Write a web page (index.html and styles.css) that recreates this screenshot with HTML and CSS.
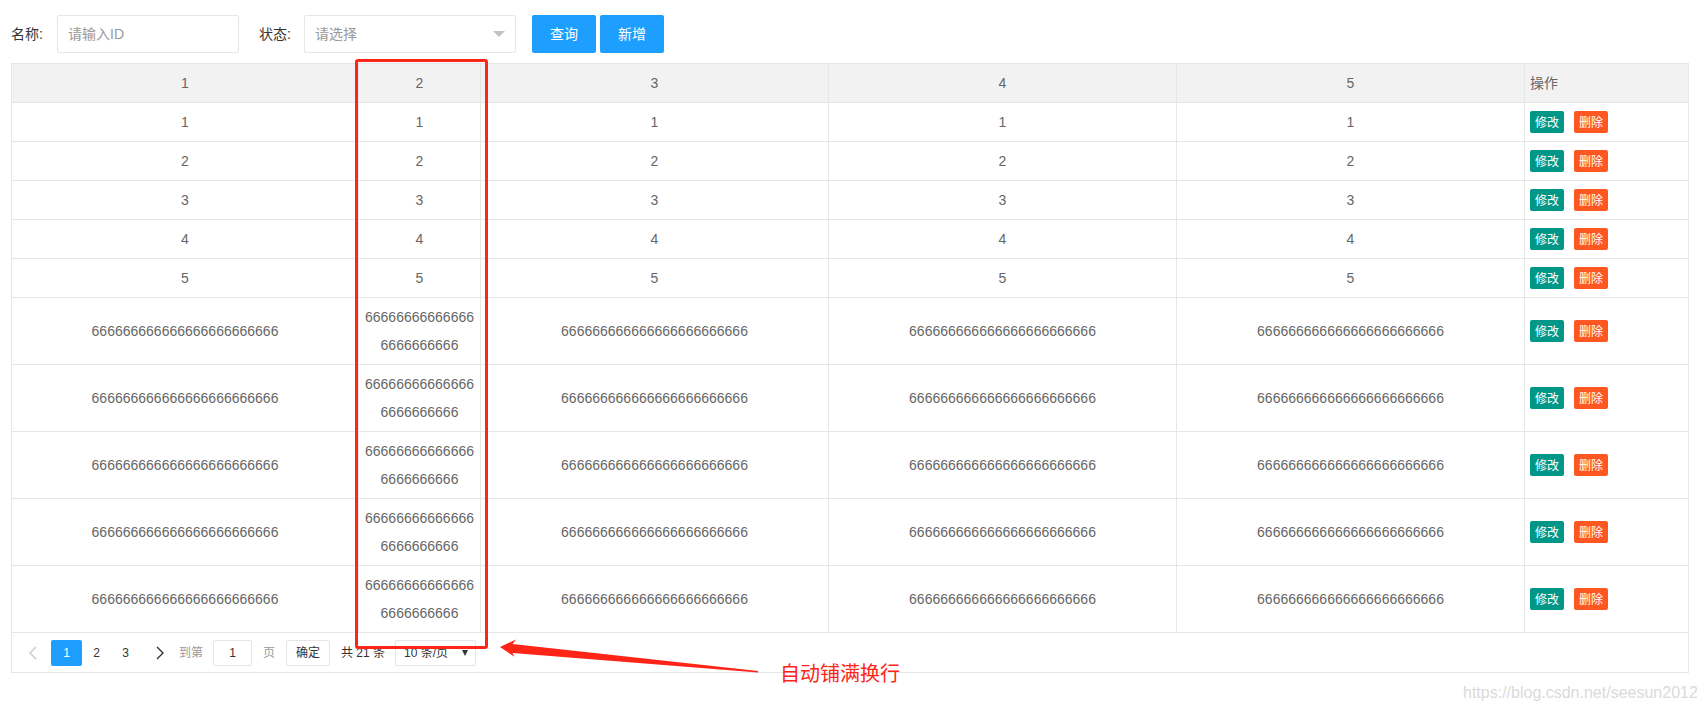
FILE: index.html
```html
<!DOCTYPE html>
<html lang="zh-CN">
<head>
<meta charset="utf-8">
<title>表格</title>
<link rel="stylesheet" href="styles.css">
</head>
<body>
<div class="page">
  <form class="toolbar">
    <label class="lbl lbl-name">名称:</label>
    <input class="input" type="text" placeholder="请输入ID">
    <label class="lbl lbl-status">状态:</label>
    <div class="select"><span class="ph">请选择</span><i class="edge"></i></div>
    <button type="button" class="btn">查询</button>
    <button type="button" class="btn btn-add">新增</button>
  </form>

  <div class="grid">
    <table class="tbl">
      <colgroup>
        <col class="c1"><col class="c2"><col class="c3"><col class="c4"><col class="c5"><col class="c6">
      </colgroup>
      <thead>
        <tr><th>1</th><th>2</th><th>3</th><th>4</th><th>5</th><th class="op">操作</th></tr>
      </thead>
      <tbody>
        <tr><td>1</td><td class="wrap">1</td><td>1</td><td>1</td><td>1</td><td class="op"><div class="ops"><span class="b b-edit">修改</span><span class="b b-del">删除</span></div></td></tr>
        <tr><td>2</td><td class="wrap">2</td><td>2</td><td>2</td><td>2</td><td class="op"><div class="ops"><span class="b b-edit">修改</span><span class="b b-del">删除</span></div></td></tr>
        <tr><td>3</td><td class="wrap">3</td><td>3</td><td>3</td><td>3</td><td class="op"><div class="ops"><span class="b b-edit">修改</span><span class="b b-del">删除</span></div></td></tr>
        <tr><td>4</td><td class="wrap">4</td><td>4</td><td>4</td><td>4</td><td class="op"><div class="ops"><span class="b b-edit">修改</span><span class="b b-del">删除</span></div></td></tr>
        <tr><td>5</td><td class="wrap">5</td><td>5</td><td>5</td><td>5</td><td class="op"><div class="ops"><span class="b b-edit">修改</span><span class="b b-del">删除</span></div></td></tr>
        <tr><td>666666666666666666666666</td><td class="wrap">666666666666666666666666</td><td>666666666666666666666666</td><td>666666666666666666666666</td><td>666666666666666666666666</td><td class="op"><div class="ops"><span class="b b-edit">修改</span><span class="b b-del">删除</span></div></td></tr>
        <tr><td>666666666666666666666666</td><td class="wrap">666666666666666666666666</td><td>666666666666666666666666</td><td>666666666666666666666666</td><td>666666666666666666666666</td><td class="op"><div class="ops"><span class="b b-edit">修改</span><span class="b b-del">删除</span></div></td></tr>
        <tr><td>666666666666666666666666</td><td class="wrap">666666666666666666666666</td><td>666666666666666666666666</td><td>666666666666666666666666</td><td>666666666666666666666666</td><td class="op"><div class="ops"><span class="b b-edit">修改</span><span class="b b-del">删除</span></div></td></tr>
        <tr><td>666666666666666666666666</td><td class="wrap">666666666666666666666666</td><td>666666666666666666666666</td><td>666666666666666666666666</td><td>666666666666666666666666</td><td class="op"><div class="ops"><span class="b b-edit">修改</span><span class="b b-del">删除</span></div></td></tr>
        <tr><td>666666666666666666666666</td><td class="wrap">666666666666666666666666</td><td>666666666666666666666666</td><td>666666666666666666666666</td><td>666666666666666666666666</td><td class="op"><div class="ops"><span class="b b-edit">修改</span><span class="b b-del">删除</span></div></td></tr>
      </tbody>
    </table>

    <div class="pager">
      <span class="pg pg-prev"><svg width="8" height="14" viewBox="0 0 8 14"><polyline points="7,1 1,7 7,13" fill="none" stroke="currentColor" stroke-width="1.4"/></svg></span>
      <span class="pg pg-curr">1</span>
      <span class="pg">2</span>
      <span class="pg">3</span>
      <span class="pg pg-next"><svg width="8" height="14" viewBox="0 0 8 14"><polyline points="1,1 7,7 1,13" fill="none" stroke="currentColor" stroke-width="1.4"/></svg></span>
      <span class="skip-lbl">到第</span>
      <span class="skip-input">1</span>
      <span class="skip-page">页</span>
      <span class="skip-btn">确定</span>
      <span class="count">共 21 条</span>
      <span class="limit">10 条/页<i class="limit-arrow"></i></span>
    </div>
  </div>
</div>

<div class="callout-box"></div>
<svg class="callout-arrow" width="270" height="45" viewBox="495 635 270 45">
  <polygon points="500,647 516,639.5 512.5,644 758,671 758,672.6 512.5,653 514.5,656.8" fill="#ff2418"/>
</svg>
<div class="callout-text">自动铺满换行</div>
<div class="watermark">https://blog.csdn.net/seesun2012</div>
</body>
</html>
```

FILE: styles.css
```css
html, body {
  margin: 0;
  padding: 0;
  background: #fff;
}
body {
  font-family: "Liberation Sans", Arial, "Noto Sans CJK SC", sans-serif;
  font-size: 14px;
  color: #333;
  position: relative;
  width: 1705px;
  height: 711px;
  overflow: hidden;
}
.page {
  padding: 15px 16px 0 11px;
}

/* toolbar */
.toolbar {
  display: flex;
  align-items: center;
  height: 38px;
  margin: 0;
}
.lbl {
  font-size: 14px;
  color: #333;
  line-height: 38px;
}
.lbl-name { width: 46px; }
.lbl-status { width: 45px; }
.input {
  box-sizing: border-box;
  width: 182px;
  height: 38px;
  border: 1px solid #e6e6e6;
  border-radius: 2px;
  padding: 0 10px;
  margin: 0 20px 0 0;
  font-family: "Liberation Sans", Arial, "Noto Sans CJK SC", sans-serif;
  font-size: 14px;
  color: #333;
  outline: none;
}
.input::placeholder { color: #999; }
.select {
  box-sizing: border-box;
  position: relative;
  width: 212px;
  height: 38px;
  border: 1px solid #e6e6e6;
  border-radius: 2px;
  padding: 0 10px;
  line-height: 36px;
  margin-right: 16px;
}
.ph { color: #999; }
.edge {
  position: absolute;
  right: 10px;
  top: 15px;
  width: 0;
  height: 0;
  border-style: solid;
  border-width: 6px 6px 0 6px;
  border-color: #c2c2c2 transparent transparent transparent;
}
.btn {
  height: 38px;
  width: 64px;
  padding: 0;
  border: none;
  border-radius: 2px;
  background: #1e9fff;
  color: #fff;
  font-family: "Liberation Sans", Arial, "Noto Sans CJK SC", sans-serif;
  font-size: 14px;
  line-height: 38px;
}
.btn-add { margin-left: 4px; }

/* grid */
.grid {
  margin-top: 10px;
  width: 1678px;
  box-sizing: border-box;
  border: 1px solid #e6e6e6;
}
.tbl {
  width: 1676px;
  border-collapse: separate;
  border-spacing: 0;
  table-layout: fixed;
}
.c1 { width: 346px; }
.c2 { width: 122px; }
.c3, .c4, .c5 { width: 348px; }
.c6 { width: 164px; }
.tbl th, .tbl td {
  padding: 5px 5px;
  line-height: 28px;
  font-size: 14px;
  font-weight: normal;
  color: #666;
  text-align: center;
  border-left: 1px solid #e6e6e6;
  border-bottom: 1px solid #e6e6e6;
  vertical-align: middle;
  white-space: nowrap;
  overflow: hidden;
}
.tbl th:first-child, .tbl td:first-child { border-left: none; }
.tbl th { background: #f2f2f2; }
.tbl .op { text-align: left; }
.tbl .wrap {
  white-space: normal;
  word-break: break-all;
}
.ops {
  display: flex;
  align-items: center;
  height: 28px;
  gap: 10px;
}
.b {
  display: inline-block;
  height: 22px;
  line-height: 22px;
  padding: 0 5px;
  font-size: 12px;
  color: #fff;
  border-radius: 2px;
  font-family: "Noto Sans CJK SC", sans-serif;
}
.b-edit { background: #009688; }
.b-del { background: #ff5722; }

/* pager */
.pager {
  box-sizing: border-box;
  height: 39px;
  padding: 7px 7px 0;
  display: flex;
  align-items: flex-start;
  font-size: 12px;
  color: #333;
}
.pager > span {
  height: 26px;
  line-height: 26px;
  box-sizing: border-box;
}
.pg {
  display: flex;
  align-items: center;
  justify-content: center;
  width: 29px;
}
.pg-prev { width: 28px; margin-right: 4px; color: #c8c8c8; }
.pg-curr { width: 31px; background: #1e9fff; color: #fff; border-radius: 2px; }
.pg-next { width: 28px; margin-left: 6px; color: #333; }
.skip-lbl { margin-left: 5px; color: #999; }
.skip-input {
  margin-left: 10px;
  width: 39px;
  border: 1px solid #e6e6e6;
  border-radius: 2px;
  text-align: center;
  line-height: 24px !important;
}
.skip-page { margin-left: 11px; color: #999; }
.skip-btn {
  margin-left: 11px;
  width: 44px;
  border: 1px solid #e6e6e6;
  border-radius: 2px;
  text-align: center;
  line-height: 24px !important;
  color: #333;
}
.count { margin-left: 11px; }
.limit {
  position: relative;
  margin-left: 10px;
  width: 81px;
  border: 1px solid #e6e6e6;
  border-radius: 2px;
  padding-left: 8px;
  line-height: 24px !important;
}
.limit-arrow {
  position: absolute;
  right: 7px;
  top: 9px;
  border-style: solid;
  border-width: 6px 3.5px 0 3.5px;
  border-color: #333 transparent transparent transparent;
}

/* annotations */
.callout-box {
  position: absolute;
  left: 355px;
  top: 59px;
  width: 127px;
  height: 584px;
  border: 3px solid #ff2418;
  border-radius: 3px;
}
.callout-arrow {
  position: absolute;
  left: 495px;
  top: 635px;
}
.callout-text {
  position: absolute;
  left: 780px;
  top: 661px;
  font-family: "Noto Sans CJK SC", sans-serif;
  font-size: 20px;
  line-height: 24px;
  color: #ff2418;
}
.watermark {
  position: absolute;
  left: 1463px;
  top: 684px;
  font-family: "Liberation Sans", Arial, sans-serif;
  font-size: 16px;
  line-height: 18px;
  color: #dadada;
}
```
